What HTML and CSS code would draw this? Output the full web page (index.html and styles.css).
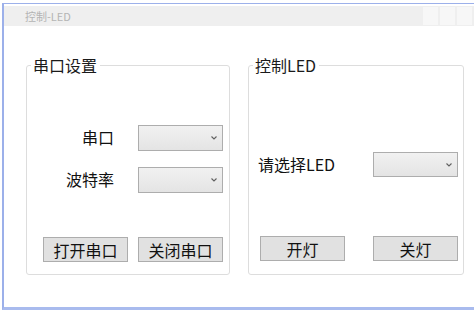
FILE: index.html
```html
<!DOCTYPE html>
<html lang="zh-CN">
<head>
<meta charset="utf-8">
<title>控制-LED</title>
<link rel="stylesheet" href="styles.css">
</head>
<body>
<div class="window">
  <div class="titlebar">
    <span class="title">控制-LED</span>
    <div class="caption-btns">
      <span class="cbtn"></span><span class="cbtn"></span><span class="cbtn"></span>
    </div>
  </div>
  <div class="client">
    <fieldset class="group group-serial">
      <legend>串口设置</legend>
      <div class="grid serial-grid">
        <span class="lbl">串口</span>
        <div class="combo"><svg class="chev" width="6" height="4" viewBox="0 0 6 4"><polyline points="0.5,0.5 3,3 5.5,0.5" fill="none" stroke="#606060" stroke-width="1.1"/></svg></div>
        <span class="lbl">波特率</span>
        <div class="combo"><svg class="chev" width="6" height="4" viewBox="0 0 6 4"><polyline points="0.5,0.5 3,3 5.5,0.5" fill="none" stroke="#606060" stroke-width="1.1"/></svg></div>
        <button class="btn row3">打开串口</button>
        <button class="btn row3">关闭串口</button>
      </div>
    </fieldset>
    <fieldset class="group group-led">
      <legend>控制LED</legend>
      <div class="grid led-grid">
        <span class="lbl lbl-left">请选择LED</span>
        <div class="combo"><svg class="chev" width="6" height="4" viewBox="0 0 6 4"><polyline points="0.5,0.5 3,3 5.5,0.5" fill="none" stroke="#606060" stroke-width="1.1"/></svg></div>
        <button class="btn">开灯</button>
        <button class="btn">关灯</button>
      </div>
    </fieldset>
  </div>
</div>
</body>
</html>
```
FILE: styles.css
```css
html, body {
  margin: 0;
  padding: 0;
  background: #ffffff;
  width: 474px;
  height: 310px;
  overflow: hidden;
  font-family: "Noto Sans CJK SC", "Noto Sans", sans-serif;
}
body {
  padding: 3px 0 0 2px;
  box-sizing: border-box;
}
.window {
  box-sizing: border-box;
  height: 307px;
  border-top: 1px solid #9cb0ea;
  border-left: 2px solid #9cb0ea;
  border-bottom: 3px solid #a9bbee;
  background: #ffffff;
}
.titlebar {
  margin-top: 2px;
  height: 20px;
  background: #efefef;
  display: flex;
  align-items: center;
  justify-content: space-between;
}
.title {
  margin-left: 21px;
  font-size: 11px;
  color: #b4b4b4;
  line-height: 20px;
}
.caption-btns {
  display: flex;
  gap: 2px;
  height: 18px;
  margin-right: 2px;
}
.cbtn {
  width: 15px;
  height: 18px;
  background: #f7f7f7;
}
.client {
  display: flex;
  align-items: flex-start;
  gap: 18px;
  padding: 30px 0 0 22px;
}
.group {
  margin: 0;
  padding: 0;
  border: 1px solid #dddddd;
  border-radius: 3px;
  box-sizing: border-box;
}
.group legend {
  margin-left: 4px;
  padding: 0 3px 0 2px;
  font-size: 16px;
  line-height: 18px;
  color: #1a1a1a;
}
.group-serial { width: 204px; height: 219px; }
.group-led { width: 216px; height: 219px; }
.grid {
  display: grid;
  grid-template-columns: 85px 85px;
}
.serial-grid {
  column-gap: 10px;
  padding: 51px 0 0 16px;
  grid-template-rows: 26px 26px 25px;
  row-gap: 16px;
}
.serial-grid .row3 { margin-top: 28px; }
.led-grid {
  column-gap: 28px;
  padding: 78px 0 0 11px;
  grid-template-rows: 25px 25px;
  row-gap: 59px;
}
.lbl {
  font-size: 16px;
  color: #111111;
  justify-self: end;
  align-self: center;
  margin-right: 14px;
  margin-top: -2px;
  white-space: nowrap;
  line-height: 20px;
}
.lbl-left {
  justify-self: start;
  margin-right: 0;
  margin-left: -2px;
}
.combo {
  box-sizing: border-box;
  height: 100%;
  border: 1px solid #adadad;
  background: linear-gradient(#f1f1f1, #e4e4e4);
  display: flex;
  align-items: center;
  justify-content: flex-end;
  padding-right: 5px;
}
.chev { display: block; }
.btn {
  box-sizing: border-box;
  height: 25px;
  width: 85px;
  margin: 0;
  padding: 0;
  border: 1px solid #adadad;
  background: #e1e1e1;
  font-family: "Noto Sans CJK SC", "Noto Sans", sans-serif;
  font-size: 16px;
  line-height: 22px;
  color: #111111;
}
```
